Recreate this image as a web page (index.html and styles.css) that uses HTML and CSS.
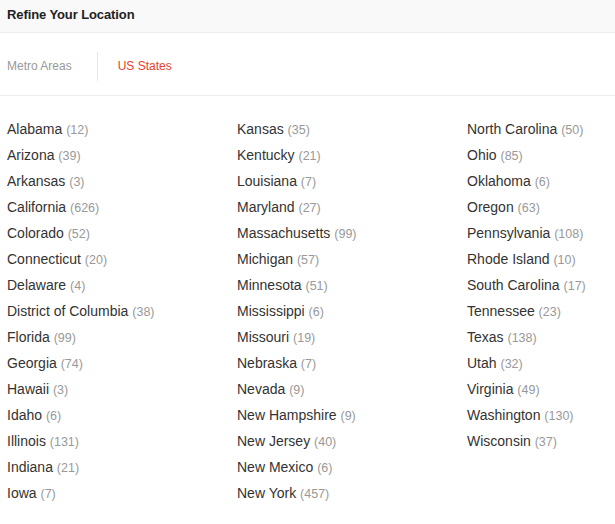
FILE: index.html
```html
<!DOCTYPE html>
<html>
<head>
<meta charset="utf-8">
<link rel="stylesheet" href="styles.css">
</head>
<body>
<div class="panel">
  <div class="header">Refine Your Location</div>
  <div class="tabs">
    <div class="tab">Metro Areas</div>
    <div class="tab active">US States</div>
  </div>
  <div class="grid">
    <ul class="col">
      <li>Alabama <span class="n">(12)</span></li>
      <li>Arizona <span class="n">(39)</span></li>
      <li>Arkansas <span class="n">(3)</span></li>
      <li>California <span class="n">(626)</span></li>
      <li>Colorado <span class="n">(52)</span></li>
      <li>Connecticut <span class="n">(20)</span></li>
      <li>Delaware <span class="n">(4)</span></li>
      <li>District of Columbia <span class="n">(38)</span></li>
      <li>Florida <span class="n">(99)</span></li>
      <li>Georgia <span class="n">(74)</span></li>
      <li>Hawaii <span class="n">(3)</span></li>
      <li>Idaho <span class="n">(6)</span></li>
      <li>Illinois <span class="n">(131)</span></li>
      <li>Indiana <span class="n">(21)</span></li>
      <li>Iowa <span class="n">(7)</span></li>
    </ul>
    <ul class="col">
      <li>Kansas <span class="n">(35)</span></li>
      <li>Kentucky <span class="n">(21)</span></li>
      <li>Louisiana <span class="n">(7)</span></li>
      <li>Maryland <span class="n">(27)</span></li>
      <li>Massachusetts <span class="n">(99)</span></li>
      <li>Michigan <span class="n">(57)</span></li>
      <li>Minnesota <span class="n">(51)</span></li>
      <li>Mississippi <span class="n">(6)</span></li>
      <li>Missouri <span class="n">(19)</span></li>
      <li>Nebraska <span class="n">(7)</span></li>
      <li>Nevada <span class="n">(9)</span></li>
      <li>New Hampshire <span class="n">(9)</span></li>
      <li>New Jersey <span class="n">(40)</span></li>
      <li>New Mexico <span class="n">(6)</span></li>
      <li>New York <span class="n">(457)</span></li>
    </ul>
    <ul class="col">
      <li>North Carolina <span class="n">(50)</span></li>
      <li>Ohio <span class="n">(85)</span></li>
      <li>Oklahoma <span class="n">(6)</span></li>
      <li>Oregon <span class="n">(63)</span></li>
      <li>Pennsylvania <span class="n">(108)</span></li>
      <li>Rhode Island <span class="n">(10)</span></li>
      <li>South Carolina <span class="n">(17)</span></li>
      <li>Tennessee <span class="n">(23)</span></li>
      <li>Texas <span class="n">(138)</span></li>
      <li>Utah <span class="n">(32)</span></li>
      <li>Virginia <span class="n">(49)</span></li>
      <li>Washington <span class="n">(130)</span></li>
      <li>Wisconsin <span class="n">(37)</span></li>
    </ul>
  </div>
</div>
</body>
</html>
```
FILE: styles.css
```css
html, body {
  margin: 0;
  padding: 0;
  background: #fff;
  font-family: "Liberation Sans", Arial, sans-serif;
}
.panel {
  width: 615px;
}
.header {
  height: 32px;
  line-height: 30px;
  padding-left: 7px;
  background: #f9f9f9;
  border-bottom: 1px solid #ececec;
  font-size: 13px;
  font-weight: bold;
  color: #222;
  letter-spacing: -0.1px;
}
.tabs {
  display: flex;
  align-items: center;
  height: 63px;
  padding-top: 4px;
  box-sizing: border-box;
  border-bottom: 1px solid #ececec;
}
.tab {
  font-size: 12px;
  color: #999;
  padding-left: 7px;
  padding-right: 25px;
  line-height: 29px;
}
.tab:first-child {
  border-right: 1px solid #e8e8e8;
}
.tab.active {
  color: #e8412c;
  padding-left: 20px;
}
.grid {
  display: grid;
  grid-template-columns: 230px 230px 155px;
  padding: 20px 0 0 7px;
}
.col {
  list-style: none;
  margin: 0;
  padding: 0;
}
.col li {
  height: 26px;
  font-size: 14px;
  line-height: 26px;
  color: #333;
  white-space: nowrap;
}
.n {
  font-size: 12.5px;
  line-height: 1;
  color: #999;
}
```
